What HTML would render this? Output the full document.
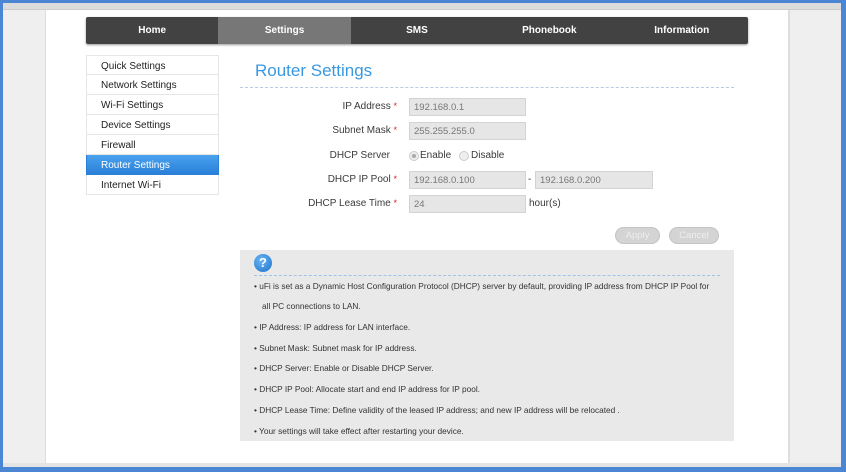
<!DOCTYPE html>
<html><head><style>
*{margin:0;padding:0;box-sizing:border-box}
body{width:846px;height:472px;overflow:hidden;font-family:"Liberation Sans",sans-serif;background:#4a86d4;position:relative}
.abs{position:absolute}
#frame{left:3px;top:3px;width:838px;height:464px;background:#efefef}
#topstrip{left:3px;top:3px;width:838px;height:7px;background:#dcdcdc;border-bottom:1px solid #ccc}
#white{left:45px;top:10px;width:745px;height:453px;background:#fff;border-left:1px solid #ddd;border-right:2px solid #ddd}
#botline{left:3px;top:463px;width:838px;height:4px;background:#e4e4e4}
#nav{left:86px;top:17px;width:662px;height:27px;background:#424242;border-radius:2px;box-shadow:0 1px 2px #999;display:flex}
#nav div{width:132.4px;color:#fff;font-weight:bold;font-size:10px;text-align:center;line-height:28px}
#nav .on{background:#777}
#side{left:86px;top:55px;width:133px}
#side div{height:20px;border:1px solid #e6e6e6;border-top:none;font-size:10px;line-height:21px;padding-left:14px;color:#222;background:#fff}
#side div:first-child{border-top:1px solid #e6e6e6}
#side .on{background:linear-gradient(#4aa3ef,#2a7fd8);color:#fff;border-color:#2a7fd8}
#title{left:255px;top:61px;font-size:17px;color:#3a98e0}
#dots{left:240px;top:87px;width:494px;border-top:1px dashed #b8cbe0}
.lbl{position:absolute;right:449px;font-size:10px;color:#3a3a3a;text-align:right}
.lbl i{color:#e02020;font-style:normal;font-size:9px}
.in{position:absolute;height:18px;background:#e6e6e6;border:1px solid #d3d3d3;font-size:9.5px;color:#777;line-height:17px;padding-left:4px}
.txt{position:absolute;font-size:10px;color:#3a3a3a}
.btn{position:absolute;height:17px;border-radius:9px;background:#d4d4d4;border:1px solid #c4c4c4;color:#eee;font-size:9.5px;text-align:center;line-height:15px}
#help{left:240px;top:250px;width:494px;height:191px;background:#e9e9e9}
#q{left:254px;top:254px;width:18px;height:18px;border-radius:50%;background:radial-gradient(circle at 40% 35%,#6ab6f5,#1c6fc9);color:#fff;font-weight:bold;font-size:13px;text-align:center;line-height:18px}
#hdots{left:254px;top:275px;width:466px;border-top:1px dashed #9ec3e6}
.h{position:absolute;left:254px;font-size:8.3px;color:#333}
.rad{position:absolute;width:10px;height:10px;border-radius:50%;border:1px solid #ccc;background:#eee}
</style></head><body>
<div id="frame" class="abs"></div>
<div id="topstrip" class="abs"></div>
<div id="white" class="abs"></div>
<div id="botline" class="abs"></div>
<div id="nav" class="abs"><div>Home</div><div class="on">Settings</div><div>SMS</div><div>Phonebook</div><div>Information</div></div>
<div id="side" class="abs"><div>Quick Settings</div><div>Network Settings</div><div>Wi-Fi Settings</div><div>Device Settings</div><div>Firewall</div><div class="on">Router Settings</div><div>Internet Wi-Fi</div></div>
<div id="title" class="abs">Router Settings</div>
<div id="dots" class="abs"></div>

<div class="lbl" style="top:101px">IP Address <i>*</i></div>
<div class="in" style="left:409px;top:98px;width:117px">192.168.0.1</div>
<div class="lbl" style="top:125px">Subnet Mask <i>*</i></div>
<div class="in" style="left:409px;top:122px;width:117px">255.255.255.0</div>
<div class="lbl" style="top:150px;right:456px">DHCP Server</div>
<div class="rad" style="left:409px;top:151px"></div><div class="abs" style="left:412px;top:154px;width:4px;height:4px;border-radius:50%;background:#aaa"></div>
<div class="txt" style="left:420px;top:150px">Enable</div>
<div class="rad" style="left:459px;top:151px"></div>
<div class="txt" style="left:471px;top:150px">Disable</div>
<div class="lbl" style="top:174px">DHCP IP Pool <i>*</i></div>
<div class="in" style="left:409px;top:171px;width:117px">192.168.0.100</div>
<div class="txt" style="left:528px;top:174px">-</div>
<div class="in" style="left:535px;top:171px;width:118px">192.168.0.200</div>
<div class="lbl" style="top:198px">DHCP Lease Time <i>*</i></div>
<div class="in" style="left:409px;top:195px;width:117px">24</div>
<div class="txt" style="left:529px;top:198px">hour(s)</div>
<div class="btn" style="left:615px;top:227px;width:45px">Apply</div>
<div class="btn" style="left:669px;top:227px;width:50px">Cancel</div>

<div id="help" class="abs"></div>
<div id="q" class="abs">?</div>
<div id="hdots" class="abs"></div>
<div class="h" style="top:281px">• uFi is set as a Dynamic Host Configuration Protocol (DHCP) server by default, providing IP address from DHCP IP Pool for</div>
<div class="h" style="top:301px;left:262px">all PC connections to LAN.</div>
<div class="h" style="top:322px">• IP Address: IP address for LAN interface.</div>
<div class="h" style="top:343px">• Subnet Mask: Subnet mask for IP address.</div>
<div class="h" style="top:363px">• DHCP Server: Enable or Disable DHCP Server.</div>
<div class="h" style="top:384px">• DHCP IP Pool: Allocate start and end IP address for IP pool.</div>
<div class="h" style="top:405px">• DHCP Lease Time: Define validity of the leased IP address; and new IP address will be relocated .</div>
<div class="h" style="top:426px">• Your settings will take effect after restarting your device.</div>
</body></html>
